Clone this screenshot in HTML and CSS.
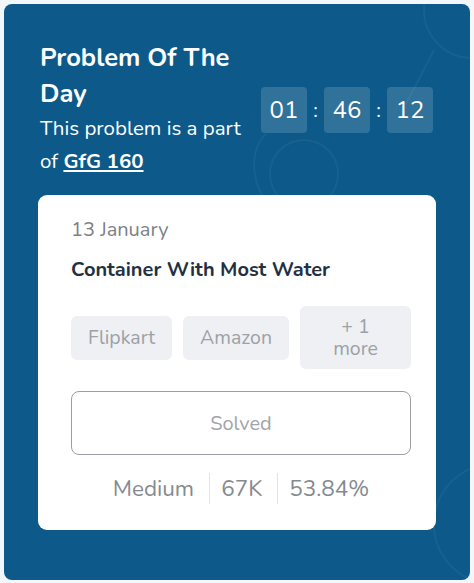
FILE: index.html
```html
<!DOCTYPE html>
<html>
<head>
    <link rel="stylesheet" href="styles.css">
</head>
<body>
    <div class="potd">
        <svg class="deco" width="466" height="576" viewBox="0 0 466 576">
            <circle cx="468" cy="6" r="48" />
            <line x1="430" y1="46" x2="402" y2="100" />
            <path d="M262 130 C 240 150, 250 200, 280 210" />
            <circle cx="300" cy="170" r="34" />
            <circle cx="490" cy="520" r="60" />
        </svg>
        <div class="head">
            <div class="intro">
                <div class="title">Problem Of The Day</div>
                <div class="sub">This problem is a part of <a class="link" href="#">GfG 160</a></div>
            </div>
            <div class="timer">
                <div class="digit">01</div>
                <div class="colon">:</div>
                <div class="digit">46</div>
                <div class="colon">:</div>
                <div class="digit">12</div>
            </div>
        </div>

        <div class="card">
            <div class="date">13 January</div>
            <div class="name">Container With Most Water</div>
            <div class="tags">
                <div class="tag">Flipkart</div>
                <div class="tag">Amazon</div>
                <div class="tag more">+ 1<br>more</div>
            </div>
            <div class="solved">Solved</div>
            <div class="stats">
                <span class="stat">Medium</span>
                <span class="stat">67K</span>
                <span class="stat">53.84%</span>
            </div>
        </div>
    </div>
</body>
</html>
```

FILE: styles.css
```css
body {
    font-family: 'Nunito', 'Lato', 'Noto Sans', sans-serif;
    margin: 0;
    padding: 4px;
    background: #f4f7fa;
}
.potd {
    position: relative;
    width: 466px;
    height: 576px;
    box-sizing: border-box;
    background: #0d5a8a;
    border-radius: 8px;
    padding: 36px 34px 0 36px;
    overflow: hidden;
}
.deco {
    position: absolute;
    left: 0;
    top: 0;
    fill: none;
    stroke: rgba(255,255,255,0.045);
    stroke-width: 2;
}
.head {
    position: relative;
    display: flex;
    justify-content: space-between;
    align-items: center;
    color: white;
}
.intro {
    width: 205px;
}
.title {
    font-size: 25.5px;
    font-weight: bold;
    line-height: 36px;
}
.sub {
    font-size: 20.5px;
    line-height: 33px;
}
.link {
    color: white;
    font-weight: bold;
    text-decoration: underline;
}
.timer {
    display: flex;
    align-items: center;
    margin-right: 3px;
    margin-top: 2px;
}
.digit {
    width: 46px;
    height: 46px;
    display: flex;
    align-items: center;
    justify-content: center;
    background: rgba(255,255,255,0.15);
    border-radius: 4px;
    font-size: 24px;
}
.colon {
    width: 17px;
    text-align: center;
    font-size: 20px;
}
.card {
    position: relative;
    margin-top: 17px;
    margin-left: -2px;
    width: 398px;
    height: 335px;
    box-sizing: border-box;
    background: white;
    border-radius: 9px;
    padding: 22px 25px 0 33px;
}
.date {
    font-size: 20px;
    line-height: 26px;
    color: #7d8187;
}
.name {
    margin-top: 14px;
    font-size: 20px;
    line-height: 26px;
    font-weight: bold;
    color: #223042;
}
.tags {
    display: flex;
    align-items: center;
    gap: 11px;
    margin-top: 23px;
}
.tag {
    background: #eef0f3;
    color: #9ca1a7;
    font-size: 19.5px;
    border-radius: 6px;
    height: 44px;
    display: flex;
    align-items: center;
    justify-content: center;
    padding: 0 17px;
}
.more {
    flex: 1;
    height: 63px;
    padding: 0;
    box-sizing: border-box;
    text-align: center;
    line-height: 22px;
}
.solved {
    margin-top: 22px;
    height: 64px;
    border: 1px solid #9a9ea4;
    border-radius: 8px;
    box-sizing: border-box;
    display: flex;
    align-items: center;
    justify-content: center;
    color: #a0a4a9;
    font-size: 20px;
}
.stats {
    display: flex;
    justify-content: center;
    margin-top: 18px;
}
.stat {
    font-size: 22.5px;
    color: #858a90;
    padding: 0 15px 0 11px;
    line-height: 31px;
    border-left: 1px solid #e2e4e7;
}
.stat:first-child {
    border-left: none;
    padding-left: 0;
}
.stat:last-child {
    padding-right: 0;
}
```
